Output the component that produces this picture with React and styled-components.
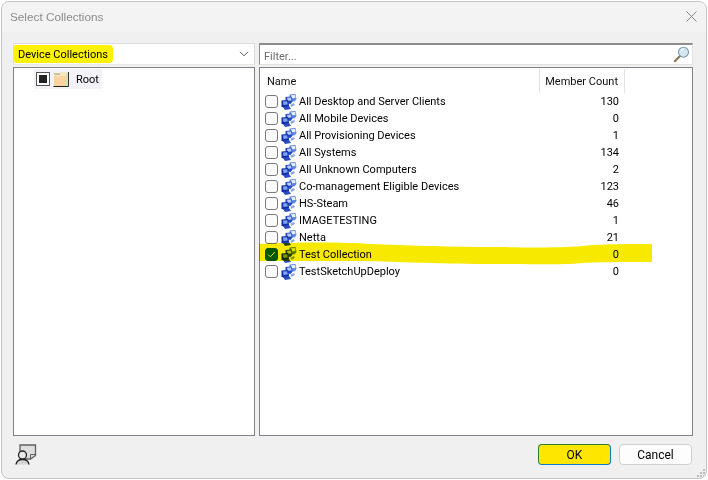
import React from "react";
import styled, { createGlobalStyle } from "styled-components";

const Global = createGlobalStyle`
  html, body { margin: 0; padding: 0; background: #fff; }
  body { width: 708px; height: 480px; overflow: hidden; font-family: Roboto, "Liberation Sans", sans-serif; font-size: 11px; color: #000; }
`;
const Page = styled.div`
  width: 708px; height: 480px; padding: 1px 1px 1px 1px; box-sizing: border-box;
`;
const Window = styled.div`
  height: 100%; display: flex; flex-direction: column; background: #f0f0f0;
  border: 1px solid #c4c4c4; border-radius: 8px; box-sizing: border-box; overflow: hidden; position: relative;
`;
const TitleBar = styled.div`
  height: 30px; flex: none; display: flex; align-items: center; justify-content: space-between;
  padding: 0 8px 2px 8px; box-sizing: border-box; background: #f3f3f3; color: #8b8b8b; font-family: "Liberation Sans", sans-serif; font-size: 11.75px;
`;
const Main = styled.div`
  flex: 1; display: grid; grid-template-columns: 242px 434px; column-gap: 4px; padding: 11px 0 0 11px; min-height: 0;
`;
const Column = styled.div`display: flex; flex-direction: column; gap: 2px; position: relative; height: 393px;`;
const Combo = styled.div`
  height: 22px; box-sizing: border-box; flex: none; background: #fff; border: 1px solid #dcdcdc; border-bottom-color: #e8e8e8;
  display: flex; align-items: center; justify-content: space-between; padding: 0 5px 0 4px; position: relative;
`;
const ComboText = styled.span`position: relative; z-index: 1;`;
const Mark = styled.span`
  position: absolute; left: 0; top: 1px; width: 99px; height: 18px; background: #fff200; border-radius: 2px 4px 4px 2px;
`;
const Filter = styled.div`
  height: 22px; flex: none; box-sizing: border-box; background: #fff; border: 1px solid #e2e2e2; border-top: 2px solid #8c8c8c; border-left: 1px solid #8c8c8c;
  display: flex; align-items: center; justify-content: space-between; padding: 0 2px 0 4px; color: #6d6d6d;
`;
const FilterText = styled.span`padding-top: 4px;`;
const Panel = styled.div`
  flex: 1; background: #fff; border: 1px solid #82828c; min-height: 0; box-sizing: border-box; position: relative;
`;
const TreeRow = styled.div`
  margin: 1px 0 0 20px; width: 68px; height: 20px; background: #f2f2f7; display: flex; align-items: center; gap: 3px; padding-left: 2px; box-sizing: border-box;
`;
const TreeBox = styled.span`
  width: 14px; height: 14px; box-sizing: border-box; border: 1px solid #555; background: #fff; display: flex; align-items: center; justify-content: center;
  &::after { content: ""; width: 8px; height: 8px; background: #222; }
`;
const TreeLabel = styled.span`margin-left: 4px;`;
const Header = styled.div`
  display: grid; grid-template-columns: 280px 85px; height: 24px; margin-top: 1px; box-sizing: border-box;
`;
const HeadCell = styled.div`
  display: flex; align-items: center; white-space: nowrap; padding: 0 6px 0 7px; border-right: 1px solid #e3e3e3; justify-content: ${p => p.$right ? "flex-end" : "flex-start"}; color: #111;
`;
const Rows = styled.div`position: relative; z-index: 1;`;
const Row = styled.div`
  display: grid; grid-template-columns: 280px 85px; height: 17px; align-items: center;
`;
const NameCell = styled.div`display: flex; align-items: center; padding-left: 5px; white-space: nowrap;`;
const Count = styled.div`text-align: right; padding-right: 6px;`;
const Check = styled.span`
  width: 13px; height: 13px; border-radius: 3px; box-sizing: border-box; flex: none;
  border: 1px solid ${p => p.$on ? "#005fb8" : "#7a7a7a"}; background: ${p => p.$on ? "#005fb8" : "#fbfbfb"};
  display: flex; align-items: center; justify-content: center; margin-right: 3px;
`;
const RowName = styled.span`margin-left: 2px;`;
const Stroke = styled.svg`
  position: absolute; left: -2px; top: 174px; z-index: 2; mix-blend-mode: multiply; pointer-events: none;
`;
const Footer = styled.div`
  height: 40px; flex: none; display: flex; align-items: flex-start; padding: 6px 14px 0 13px; box-sizing: border-box; gap: 8px;
`;
const Help = styled.span`margin-right: auto; display: flex;`;
const Button = styled.button`
  width: 73px; height: 21px; padding: 0; font: inherit; font-size: 12px; color: #000; border-radius: 4px; box-sizing: border-box;
  background: ${p => p.$primary ? "#ffe600" : "#fdfdfd"};
  border: 1px solid ${p => p.$primary ? "#0a7ad0" : "#d0d0d0"};
  ${p => p.$primary ? "border-top-color: #2c7f30; border-left-color: #2c7f30;" : ""}
`;
const Grip = styled.svg`position: absolute; right: 1px; bottom: 1px;`;

const Close = () => (
  <svg width="13" height="13" viewBox="0 0 13 13"><path d="M1.500 1.500l10 10M11.500 1.500l-10 10" stroke="#858585" strokeWidth="1" fill="none" /></svg>
);
const Chevron = () => (
  <svg width="10" height="6" viewBox="0 0 10 6"><path d="M1 .8l4 4 4-4" stroke="#555" fill="none" /></svg>
);
const Magnifier = () => (
  <svg width="17" height="17" viewBox="0 0 17 17">
    <path d="M7 10L1.800 15.200" stroke="#8a7a55" strokeWidth="2.200" strokeLinecap="round" />
    <circle cx="10.500" cy="6.200" r="5" fill="#d4e6f2" stroke="#7c97a8" strokeWidth="1.100" />
    <path d="M7.800 5.200a3.400 3.400 0 0 1 3-2.400" stroke="#fff" fill="none" />
  </svg>
);
const Folder = () => (
  <svg width="16" height="16" viewBox="0 0 16 16">
    <path d="M1 2h6l1-1h7v14H1z" fill="#f3e6c0" />
    <path d="M1 3h6" stroke="#a0a080" />
    <path d="M1 5h12v10H1z" fill="#fcd3a0" />
    <path d="M13 2h2v13h-2z" fill="#cfe3b4" />
    <path d="M.500 15.500h15" stroke="#222" />
    <path d="M15.500 1V15.500" stroke="#333" />
  </svg>
);
const Computers = () => (
  <svg width="16" height="16" viewBox="0 0 16 16" style={{ flex: "none" }}>
    <path d="M8.500 0.500l6-.5 1 5-2 2.500-5-1z" fill="#5e86e0" />
    <path d="M10 1.200l4-.3.500 3.100-4 .2z" fill="#e8f0ff" />
    <path d="M4.500 3l6-.5 1 5-2 2.500-5-1z" fill="#1f47c8" />
    <path d="M6 3.800l4-.3.500 3-4 .3z" fill="#b8ccff" />
    <path d="M.500 6.500l6.500-.5 1 5.500-2 2.500-5.500-1z" fill="#0f2fa8" />
    <path d="M2 7.500l4.200-.3.500 3.400-4.200.3z" fill="#7fa4f5" />
    <path d="M2 13l6-1 2 3-6 1z" fill="#2a4bc0" />
    <path d="M9.500 10.500l3.500-1.500 1 2-4 2z" fill="#8ea6e6" />
  </svg>
);
const Tick = () => (
  <svg width="9" height="9" viewBox="0 0 9 9"><path d="M1.200 4.600l2.200 2.200L7.800 2" stroke="#fff" strokeWidth="1" fill="none" /></svg>
);
const Feedback = () => (
  <svg width="22" height="23" viewBox="0 0 22 23">
    <path d="M5 1h15.500v10.500L15.500 15H5z" fill="#dedede" stroke="#5f5f5f" strokeWidth="1.300" />
    <path d="M20 10.500h-4.500v4.500" fill="none" stroke="#5f5f5f" />
    <circle cx="7.500" cy="11" r="4" fill="#e9e9e9" stroke="#222" strokeWidth="1.300" />
    <path d="M1 20.500c.5-3.500 3-5 6.500-5s6 1.500 6.500 5" fill="#d5d5d5" stroke="#222" strokeWidth="1.300" />
  </svg>
);
const GripDots = () => (
  <Grip width="8" height="8" viewBox="0 0 8 8" fill="#bdbdbd">
    <rect x="6" y="0" width="2" height="2" /><rect x="3" y="3" width="2" height="2" /><rect x="6" y="3" width="2" height="2" />
    <rect x="0" y="6" width="2" height="2" /><rect x="3" y="6" width="2" height="2" /><rect x="6" y="6" width="2" height="2" />
  </Grip>
);

const items = [
  ["All Desktop and Server Clients", 130],
  ["All Mobile Devices", 0],
  ["All Provisioning Devices", 1],
  ["All Systems", 134],
  ["All Unknown Computers", 2],
  ["Co-management Eligible Devices", 123],
  ["HS-Steam", 46],
  ["IMAGETESTING", 1],
  ["Netta", 21],
  ["Test Collection", 0, true],
  ["TestSketchUpDeploy", 0],
];

export default function App() {
  return (
    <Page>
      <Global />
      <Window>
        <TitleBar>
          <span>Select Collections</span>
          <Close />
        </TitleBar>
        <Main>
          <Column>
            <Combo>
              <Mark />
              <ComboText>Device Collections</ComboText>
              <Chevron />
            </Combo>
            <Panel>
              <TreeRow>
                <TreeBox />
                <Folder />
                <TreeLabel>Root</TreeLabel>
              </TreeRow>
            </Panel>
          </Column>
          <Column>
            <Filter>
              <FilterText>Filter...</FilterText>
              <Magnifier />
            </Filter>
            <Panel>
              <Header>
                <HeadCell>Name</HeadCell>
                <HeadCell $right>Member Count</HeadCell>
              </Header>
              <Rows>
                {items.map(([name, count, on]) => (
                  <Row key={name}>
                    <NameCell>
                      <Check $on={on}>{on && <Tick />}</Check>
                      <Computers />
                      <RowName>{name}</RowName>
                    </NameCell>
                    <Count>{count}</Count>
                  </Row>
                ))}
              </Rows>
              <Stroke width="396" height="26" viewBox="0 0 396 26">
                <path d="M1 2C40 0 90 0 112 2C150 3 180 5 240 5C290 6 315 5 325 4C340 2 370 2 394 2V20C370 20 340 20 325 21C310 23 280 22 240 22C180 22 150 20 112 19C80 19 40 19 1 19Z" fill="#f7ea00" />
              </Stroke>
            </Panel>
          </Column>
        </Main>
        <Footer>
          <Help><Feedback /></Help>
          <Button $primary>OK</Button>
          <Button>Cancel</Button>
        </Footer>
        <GripDots />
      </Window>
    </Page>
  );
}
